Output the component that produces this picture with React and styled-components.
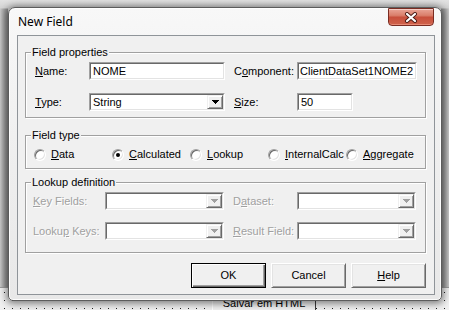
import styled, { createGlobalStyle } from 'styled-components';

const GlobalStyle = createGlobalStyle`
  html, body { margin: 0; padding: 0; }
  body {
    width: 449px;
    height: 310px;
    overflow: hidden;
    font-family: "Liberation Sans", Arial, sans-serif;
    font-size: 11px;
    color: #000;
  }
  * { box-sizing: border-box; }
`;

const Desktop = styled.div`
  position: relative;
  width: 449px;
  height: 310px;
  overflow: hidden;
  display: flex;
  flex-direction: column;
`;

const IdeArea = styled.div`
  flex: none;
  height: 288px;
  background:
    linear-gradient(180deg, #e2e2e2 0, #d4d4d4 8px, transparent 9px),
    linear-gradient(90deg, #c9c9c9 0, #b4b4b4 2px, #9c9c9c 5px, #8e8e8e 8px, #d8d8d8 8px,
      #d8d8d8 441px, #8e8e8e 441px, #9c9c9c 444px, #b4b4b4 447px, #c9c9c9 449px);
  border-bottom: 1px solid #9a9a9a;
`;

const DesignForm = styled.div`
  position: relative;
  flex: 1;
  background-color: #f0f0f0;
  background-image:
    linear-gradient(90deg, #f0f0f0 7px, transparent 7px),
    linear-gradient(#f0f0f0 7px, #1e1e1e 7px);
  background-size: 8px 8px;
  background-position: 5px 5px;
`;

const FormButton = styled.div`
  position: absolute;
  left: 212px;
  top: 0;
  width: 104px;
  height: 22px;
  padding-top: 9px;
  text-align: center;
  line-height: 13px;
  background: #f0f0f0;
  border-left: 1px solid #fff;
  border-right: 1px solid #3c3c3c;
`;

const Window = styled.div`
  position: absolute;
  left: 8px;
  top: 7px;
  width: 434px;
  height: 294px;
  display: flex;
  flex-direction: column;
  padding: 0 6px 5px 8px;
  border: 1px solid #5c5c5c;
  border-radius: 7px 7px 5px 5px;
  background: linear-gradient(180deg, #f8f8f8 0%, #eeeeee 55%, #e8e8e8 100%);
  box-shadow: inset 0 0 0 1px rgba(255, 255, 255, 0.85), 0 1px 7px 2px rgba(0, 0, 0, 0.45);
`;

const TitleBar = styled.div`
  flex: none;
  height: 27px;
  display: flex;
  align-items: center;
  padding-left: 1px;
`;

const Title = styled.span`
  flex: 1;
  font-family: "Noto Sans", "Open Sans", sans-serif;
  font-size: 12px;
  line-height: 16px;
  color: #000;
`;

const CloseButton = styled.div`
  align-self: flex-start;
  width: 46px;
  height: 18px;
  margin-right: 1px;
  display: flex;
  align-items: center;
  justify-content: center;
  border: 1px solid #7a2c22;
  border-radius: 0 0 4px 4px;
  background: linear-gradient(180deg, #e9a597 0%, #da7f6b 40%, #c8503c 52%, #cf634c 100%);
  box-shadow: inset 0 1px 0 rgba(255, 255, 255, 0.45), inset 0 -1px 0 rgba(255, 180, 160, 0.5);
`;

const Client = styled.div`
  flex: 1;
  display: flex;
  flex-direction: column;
  padding: 16px 8px 0 7px;
  background: #f0f0f0;
  border: 1px solid #8f9499;
`;

const GroupBox = styled.div`
  position: relative;
  margin-bottom: ${p => p.$gap}px;
  padding: ${p => p.$pad};
  border: 1px solid #a0a0a0;
  box-shadow: inset 1px 1px 0 #fff, 1px 1px 0 #fff;
`;

const Caption = styled.span`
  position: absolute;
  top: -7px;
  left: 5px;
  padding: 0 1px;
  line-height: 13px;
  background: #f0f0f0;
`;

const FieldGrid = styled.div`
  display: grid;
  grid-template-columns: ${p => p.$cols};
  grid-auto-rows: 18px;
  row-gap: ${p => p.$rowGap}px;
  align-items: center;
`;

const Label = styled.span`
  line-height: 13px;
  white-space: nowrap;
  color: ${p => (p.$disabled ? '#a0a0a0' : '#000')};
  text-shadow: ${p => (p.$disabled ? '1px 1px 0 #fff' : 'none')};
`;

const Field = styled.div`
  width: ${p => p.$w}px;
  height: 18px;
  display: flex;
  border: 1px solid;
  border-color: #a0a0a0 #fff #fff #a0a0a0;
`;

const FieldInner = styled.div`
  flex: 1;
  min-width: 0;
  display: flex;
  align-items: center;
  background: #fff;
  border: 1px solid;
  border-color: #696969 #e3e3e3 #e3e3e3 #696969;
`;

const FieldText = styled.span`
  flex: 1;
  padding-left: ${p => p.$indent ?? 2}px;
  line-height: 13px;
  white-space: nowrap;
  overflow: hidden;
`;

const DropButton = styled.div`
  align-self: stretch;
  width: 16px;
  display: flex;
  align-items: center;
  justify-content: center;
  background: #f0f0f0;
  border: 1px solid;
  border-color: #f0f0f0 #696969 #696969 #f0f0f0;
  box-shadow: inset 1px 1px 0 #fff, inset -1px -1px 0 #a0a0a0;
`;

const RadioRow = styled.div`
  display: grid;
  grid-template-columns: repeat(5, 78px);
  padding-left: 8px;
`;

const RadioOption = styled.div`
  display: flex;
  align-items: center;
  gap: 5px;
  height: 13px;
  line-height: 13px;
  white-space: nowrap;
`;

const RadioDot = styled.span`
  position: relative;
  flex: none;
  width: 12px;
  height: 12px;
  border-radius: 50%;
  background: #fff;
  border: 1px solid;
  border-color: #a0a0a0 #fff #fff #a0a0a0;
  box-shadow: inset 1px 1px 0 #696969, inset -1px -1px 0 #e3e3e3;

  &::after {
    content: '';
    display: ${p => (p.$checked ? 'block' : 'none')};
    position: absolute;
    left: 3px;
    top: 3px;
    width: 4px;
    height: 4px;
    border-radius: 50%;
    background: #000;
  }
`;

const ButtonRow = styled.div`
  display: flex;
  justify-content: flex-end;
  gap: 5px;
`;

const Button = styled.div`
  width: 75px;
  height: 25px;
  display: flex;
  align-items: center;
  justify-content: center;
  line-height: 13px;
  background: #f0f0f0;
  border: 1px solid;
  border-color: ${p => (p.$default ? '#000' : '#fff #696969 #696969 #fff')};
  box-shadow: ${p =>
    p.$default
      ? 'inset 1px 1px 0 #fff, inset -1px -1px 0 #696969, inset -2px -2px 0 #a0a0a0'
      : 'inset 1px 1px 0 #e3e3e3, inset -1px -1px 0 #a0a0a0'};
`;

const Arrow = ({ disabled }) => (
  <svg width="7" height="4" viewBox="0 0 7 4" shapeRendering="crispEdges">
    <polygon points="0,0 7,0 3.5,4" fill={disabled ? '#a0a0a0' : '#000'} />
  </svg>
);

const CloseGlyph = () => (
  <svg width="14" height="11" viewBox="0 0 14 11">
    <path d="M3 2 L11 9 M11 2 L3 9" stroke="#4a1a14" strokeWidth="4" strokeLinecap="round" fill="none" />
    <path d="M3 2 L11 9 M11 2 L3 9" stroke="#fff" strokeWidth="2.2" strokeLinecap="round" fill="none" />
  </svg>
);

const Edit = ({ w, indent, children }) => (
  <Field $w={w}>
    <FieldInner>
      <FieldText $indent={indent}>{children}</FieldText>
    </FieldInner>
  </Field>
);

const Combo = ({ w, value, disabled }) => (
  <Field $w={w}>
    <FieldInner>
      <FieldText>{value}</FieldText>
      <DropButton>
        <Arrow disabled={disabled} />
      </DropButton>
    </FieldInner>
  </Field>
);

const fieldTypes = [
  { key: 'D', rest: 'ata' },
  { key: 'C', rest: 'alculated', checked: true },
  { key: 'L', rest: 'ookup' },
  { key: 'I', rest: 'nternalCalc' },
  { key: 'A', rest: 'ggregate' }
];

const App = () => (
  <Desktop>
    <GlobalStyle />
    <IdeArea />
    <DesignForm>
      <FormButton>Salvar em HTML</FormButton>
    </DesignForm>

    <Window>
      <TitleBar>
        <Title>New Field</Title>
        <CloseButton>
          <CloseGlyph />
        </CloseButton>
      </TitleBar>

      <Client>
        <GroupBox $gap={17} $pad="9px 0 6px 9px">
          <Caption>Field properties</Caption>
          <FieldGrid $cols="54px 145px 63px 1fr" $rowGap={13}>
            <Label><u>N</u>ame:</Label>
            <Edit w={136}>NOME</Edit>
            <Label>C<u>o</u>mponent:</Label>
            <Edit w={120} indent={1}>ClientDataSet1NOME2</Edit>
            <Label><u>T</u>ype:</Label>
            <Combo w={136} value="String" />
            <Label><u>S</u>ize:</Label>
            <Edit w={56}>50</Edit>
          </FieldGrid>
        </GroupBox>

        <GroupBox $gap={13} $pad="12px 0 7px 0">
          <Caption>Field type</Caption>
          <RadioRow>
            {fieldTypes.map((t, i) => (
              <RadioOption key={i}>
                <RadioDot $checked={t.checked} />
                <span>
                  <u>{t.key}</u>
                  {t.rest}
                </span>
              </RadioOption>
            ))}
          </RadioRow>
        </GroupBox>

        <GroupBox $gap={10} $pad="9px 0 12px 7px">
          <Caption>Lookup definition</Caption>
          <FieldGrid $cols="72px 128px 64px 1fr" $rowGap={12}>
            <Label $disabled><u>K</u>ey Fields:</Label>
            <Combo w={119} disabled />
            <Label $disabled>D<u>a</u>taset:</Label>
            <Combo w={119} disabled />
            <Label $disabled>Looku<u>p</u> Keys:</Label>
            <Combo w={119} disabled />
            <Label $disabled><u>R</u>esult Field:</Label>
            <Combo w={119} disabled />
          </FieldGrid>
        </GroupBox>

        <ButtonRow>
          <Button $default>OK</Button>
          <Button>Cancel</Button>
          <Button><u>H</u>elp</Button>
        </ButtonRow>
      </Client>
    </Window>
  </Desktop>
);

export default App;
